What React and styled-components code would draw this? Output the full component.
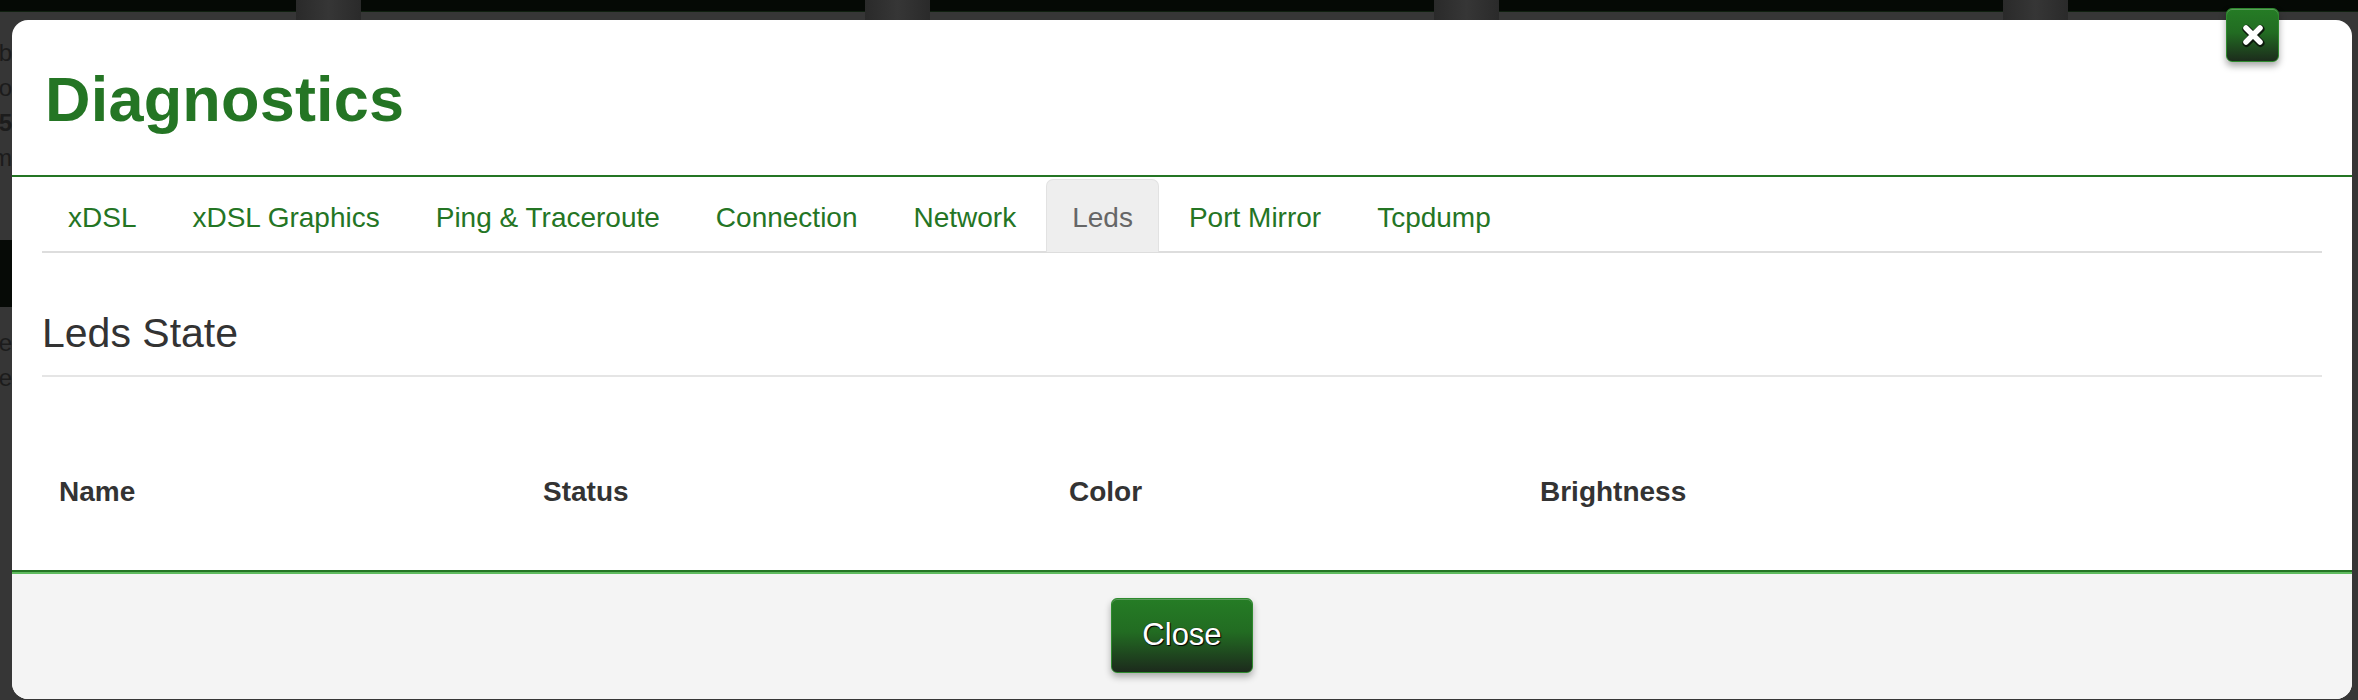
import React from "react";
import styled, { createGlobalStyle } from "styled-components";

const GlobalStyle = createGlobalStyle`
  html, body {
    margin: 0;
    padding: 0;
    background: #363636;
    font-family: "Liberation Sans", Arial, Helvetica, sans-serif;
  }
  * { box-sizing: border-box; }
`;

const green = "#247524";

const tabs = [
  "xDSL",
  "xDSL Graphics",
  "Ping & Traceroute",
  "Connection",
  "Network",
  "Leds",
  "Port Mirror",
  "Tcpdump",
];

const columns = ["Name", "Status", "Color", "Brightness"];

// page behind the backdrop, only its edges show round the modal
const Backdrop = styled.div`
  position: fixed;
  inset: 0;
  background: #363636;
  overflow: hidden;
`;

const TopBar = styled.div`
  height: 20px;
  display: flex;
  gap: 504px;
  padding-left: 296px;
  background: linear-gradient(#050905 0, #050905 11px, #0f1f0f 11px, #0f1f0f 12px, #363636 12px);
`;

const BarBlock = styled.div`
  width: 65px;
  height: 20px;
  background: linear-gradient(90deg, #2a2a2a, #363636 50%, #2a2a2a);
`;

const SideText = styled.div`
  width: 12px;
  padding-top: 15px;
  display: flex;
  flex-direction: column;
  align-items: flex-end;
  overflow: hidden;
  color: #1c1c1c;
  font-size: 24px;
  line-height: 35px;
`;

const SideLine = styled.div`
  font-weight: ${(p) => (p.$bold ? 700 : 400)};
  white-space: nowrap;
`;

const SideBand = styled.div`
  width: 12px;
  height: 67px;
  margin: 65px 0 18px;
  background: #060a06;
`;

const Modal = styled.div`
  position: fixed;
  top: 20px;
  left: 12px;
  right: 6px;
  background: #fff;
  border-radius: 16px;
`;

const Header = styled.div`
  height: 157px;
  padding: 48px 33px 0;
  border-bottom: 2px solid ${green};
`;

const Title = styled.h1`
  margin: 0;
  font-size: 63px;
  line-height: 63px;
  font-weight: 700;
  color: ${green};
  letter-spacing: 0.2px;
`;

const IconButton = styled.button`
  position: absolute;
  top: -12px;
  right: 73px;
  width: 53px;
  height: 54px;
  padding: 0;
  border: 1px solid #2d8a2d;
  border-radius: 6px;
  background: linear-gradient(#257c25, #226c22 45%, #1c2c1c);
  box-shadow: inset 0 1px 0 rgba(255, 255, 255, 0.25),
    0 4px 7px rgba(0, 0, 0, 0.35);
  display: flex;
  align-items: center;
  justify-content: center;
  cursor: pointer;
`;

const Body = styled.div`
  padding: 0 30px;
  height: 393px;
  border-bottom: 2px solid ${green};
`;

const Tabs = styled.ul`
  list-style: none;
  margin: 2px 0 0;
  padding: 0;
  display: flex;
  gap: 4px;
  border-bottom: 2px solid #dddddd;
`;

const Tab = styled.li`
  margin-bottom: -1px;
  padding: 3px 25px 0;
  height: 73px;
  line-height: 69px;
  font-size: 28px;
  color: ${(p) => (p.$active ? "#666666" : green)};
  background: ${(p) => (p.$active ? "#eeeeee" : "transparent")};
  border: 1px solid ${(p) => (p.$active ? "#e2e2e2" : "transparent")};
  border-bottom: none;
  border-radius: 7px 7px 0 0;
  cursor: pointer;
  white-space: nowrap;
`;

const Section = styled.div`
  margin-top: 60px;
  padding-bottom: 21px;
  border-bottom: 2px solid #e5e5e5;
`;

const SectionTitle = styled.h2`
  margin: 0;
  font-size: 41px;
  line-height: 41px;
  font-weight: 400;
  color: #333333;
`;

const HeadRow = styled.div`
  margin-top: 101px;
  display: grid;
  grid-template-columns: 484px 526px 471px 1fr;
`;

const HeadCell = styled.div`
  padding-left: 17px;
  font-size: 28px;
  line-height: 28px;
  font-weight: 700;
  color: #333333;
`;

const Footer = styled.div`
  border-top: 2px solid #5fbb5f;
  background: #f4f4f4;
  padding: 24px 0 26px;
  display: flex;
  justify-content: center;
  border-radius: 0 0 16px 16px;
`;

const CloseButton = styled.button`
  width: 142px;
  height: 75px;
  padding: 0 0 2px;
  border: 1px solid #2d8a2d;
  border-radius: 6px;
  background: linear-gradient(#257c25, #226c22 45%, #1c2a1c);
  box-shadow: inset 0 1px 0 rgba(255, 255, 255, 0.25),
    0 4px 7px rgba(0, 0, 0, 0.3);
  color: #fff;
  font-family: "Liberation Sans", Arial, sans-serif;
  font-size: 31px;
  text-shadow: 1px 1px 1px #000, 0 0 1px #000;
  cursor: pointer;
`;

const CrossIcon = () => (
  <svg width="26" height="26" viewBox="0 0 26 26">
    <g strokeLinecap="round">
      <path d="M6 6 L20 20 M20 6 L6 20" stroke="#0d1a0d" strokeWidth="8" transform="translate(0.5 1)" />
      <path d="M6 6 L20 20 M20 6 L6 20" stroke="#ffffff" strokeWidth="5.5" />
    </g>
  </svg>
);

const App = () => {
  return (
    <>
      <GlobalStyle />
      <Backdrop>
        <TopBar>
          {[0, 1, 2, 3].map((i) => (
            <BarBlock key={i} />
          ))}
        </TopBar>
        <SideText>
          <SideLine>lab</SideLine>
          <SideLine>o</SideLine>
          <SideLine $bold>5</SideLine>
          <SideLine>m</SideLine>
          <SideBand />
          <SideLine>e</SideLine>
          <SideLine>e</SideLine>
        </SideText>
      </Backdrop>

      <Modal>
        <IconButton aria-label="Close">
          <CrossIcon />
        </IconButton>
        <Header>
          <Title>Diagnostics</Title>
        </Header>
        <Body>
          <Tabs>
            {tabs.map((tab) => (
              <Tab key={tab} $active={tab === "Leds"}>
                {tab}
              </Tab>
            ))}
          </Tabs>
          <Section>
            <SectionTitle>Leds State</SectionTitle>
          </Section>
          <HeadRow>
            {columns.map((col) => (
              <HeadCell key={col}>{col}</HeadCell>
            ))}
          </HeadRow>
        </Body>
        <Footer>
          <CloseButton>Close</CloseButton>
        </Footer>
      </Modal>
    </>
  );
};

export default App;
